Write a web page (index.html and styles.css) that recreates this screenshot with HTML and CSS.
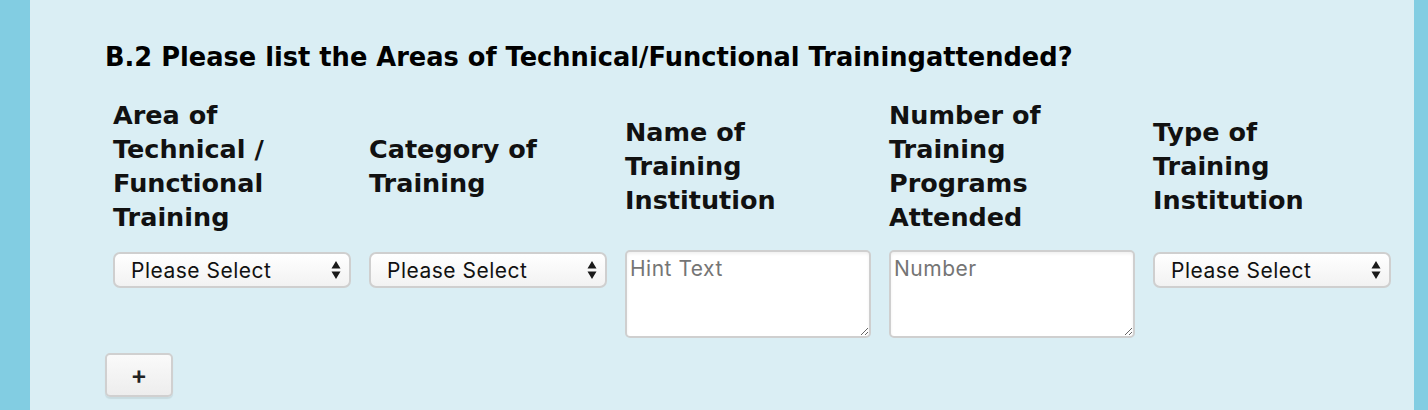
FILE: index.html
```html
<!DOCTYPE html>
<html lang="en">
<head>
    <meta charset="UTF-8">
    <meta name="viewport" content="width=device-width, initial-scale=1.0">
    <title>Technical Training</title>
    <link rel="stylesheet" href="styles.css">
</head>
<body>
    <div class="panel">
        <h2 class="question">B.2 Please list the Areas of Technical/Functional Trainingattended?</h2>
        <div class="training-grid">
            <div class="col-head">Area of<br>Technical /<br>Functional<br>Training</div>
            <div class="col-head">Category of<br>Training</div>
            <div class="col-head">Name of<br>Training<br>Institution</div>
            <div class="col-head">Number of<br>Training<br>Programs<br>Attended</div>
            <div class="col-head">Type of<br>Training<br>Institution</div>

            <div class="select-wrap">
                <select class="field-select">
                    <option>Please Select</option>
                </select>
                <svg class="arrows" width="10" height="18" viewBox="0 0 10 18"><path d="M5 0 L9.5 7.5 L0.5 7.5 Z M0.5 10.5 L9.5 10.5 L5 18 Z" fill="#1a1a1a"/></svg>
            </div>
            <div class="select-wrap">
                <select class="field-select">
                    <option>Please Select</option>
                </select>
                <svg class="arrows" width="10" height="18" viewBox="0 0 10 18"><path d="M5 0 L9.5 7.5 L0.5 7.5 Z M0.5 10.5 L9.5 10.5 L5 18 Z" fill="#1a1a1a"/></svg>
            </div>
            <textarea class="field-text" placeholder="Hint Text"></textarea>
            <textarea class="field-text" placeholder="Number"></textarea>
            <div class="select-wrap">
                <select class="field-select">
                    <option>Please Select</option>
                </select>
                <svg class="arrows" width="10" height="18" viewBox="0 0 10 18"><path d="M5 0 L9.5 7.5 L0.5 7.5 Z M0.5 10.5 L9.5 10.5 L5 18 Z" fill="#1a1a1a"/></svg>
            </div>
        </div>
        <button class="add-btn">+</button>
    </div>
</body>
</html>
```

FILE: styles.css
```css
body {
    margin: 0;
    background-color: #82cde2;
    font-family: 'DejaVu Sans', sans-serif;
}

.panel {
    margin-left: 30px;
    width: 1384px;
    height: 410px;
    box-sizing: border-box;
    background-color: #daeef4;
    padding: 42px 0 0 75px;
    overflow: hidden;
}

.question {
    margin: 0;
    font-size: 25.7px;
    line-height: 30px;
    font-weight: bold;
    color: #000;
}

.training-grid {
    display: grid;
    grid-template-columns: 238px 238px 246px 246px 238px;
    column-gap: 18px;
    row-gap: 16px;
    margin: 26px 0 0 8px;
    align-items: start;
}

.col-head {
    align-self: center;
    font-size: 25.5px;
    line-height: 34px;
    font-weight: bold;
    color: #111;
}

.select-wrap {
    position: relative;
    margin-top: 2px;
}

.field-select {
    appearance: none;
    -webkit-appearance: none;
    width: 238px;
    height: 36px;
    box-sizing: border-box;
    padding: 0 30px 0 16px;
    border: 2px solid #cfcfcf;
    border-radius: 7px;
    background: linear-gradient(#ffffff, #f2f2f2);
    font-family: Inter, 'Liberation Sans', sans-serif;
    font-size: 21px;
    letter-spacing: 0.5px;
    color: #111;
}

.arrows {
    position: absolute;
    right: 10px;
    top: 9px;
    pointer-events: none;
}

.field-text {
    width: 246px;
    height: 88px;
    box-sizing: border-box;
    margin: 0;
    padding: 5px 3px 4px;
    border: 2px solid #cfcfcf;
    border-radius: 5px;
    background: #fff;
    box-shadow: inset 0 2px 3px rgba(0, 0, 0, 0.06);
    font-family: Inter, 'Liberation Sans', sans-serif;
    font-size: 21px;
    letter-spacing: 0.5px;
    line-height: 24px;
}

.field-text::placeholder {
    color: #757575;
}

.add-btn {
    display: block;
    margin-top: 15px;
    width: 68px;
    height: 44px;
    border: 2px solid #d0d0d0;
    border-radius: 5px;
    background: linear-gradient(#fafafa, #ededed);
    box-shadow: 0 2px 1px rgba(0, 0, 0, 0.08);
    font-family: Inter, 'Liberation Sans', sans-serif;
    font-size: 25px;
    font-weight: 600;
    color: #222;
}
```
